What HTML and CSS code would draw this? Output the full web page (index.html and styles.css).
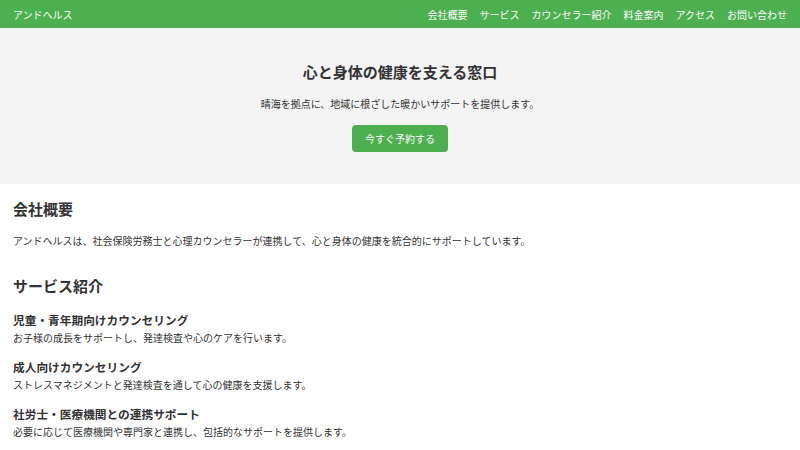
FILE: index.html
```html
<!DOCTYPE html>
<html lang="ja">

<head>
    <meta charset="UTF-8">
    <meta name="viewport" content="width=device-width, initial-scale=1.0">
    <title>アンドヘルス</title>
    <link rel="stylesheet" href="styles.css">
</head>

<body>
    <!-- ヘッダー -->
    <header class="site-header">
        <div class="logo">アンドヘルス</div>
        <ul class="nav">
            <li>会社概要</li>
            <li>サービス</li>
            <li>カウンセラー紹介</li>
            <li>料金案内</li>
            <li>アクセス</li>
            <li>お問い合わせ</li>
        </ul>
    </header>

    <!-- メインビジュアル -->
    <section class="hero">
        <h1>心と身体の健康を支える窓口</h1>
        <p>晴海を拠点に、地域に根ざした暖かいサポートを提供します。</p>
        <a class="btn" href="#">今すぐ予約する</a>
    </section>

    <!-- 本文 -->
    <main class="content">
        <h2>会社概要</h2>
        <p class="lead">アンドヘルスは、社会保険労務士と心理カウンセラーが連携して、心と身体の健康を統合的にサポートしています。</p>

        <h2 class="section-title">サービス紹介</h2>
        <div class="service">
            <h3>児童・青年期向けカウンセリング</h3>
            <p>お子様の成長をサポートし、発達検査や心のケアを行います。</p>
        </div>
        <div class="service">
            <h3>成人向けカウンセリング</h3>
            <p>ストレスマネジメントと発達検査を通して心の健康を支援します。</p>
        </div>
        <div class="service">
            <h3>社労士・医療機関との連携サポート</h3>
            <p>必要に応じて医療機関や専門家と連携し、包括的なサポートを提供します。</p>
        </div>
    </main>
</body>

</html>
```

FILE: styles.css
```css
body,
ul,
li,
h1,
h2,
h3,
p {
    margin: 0;
    padding: 0;
}

li {
    list-style: none;
}

body {
    font-family: "Noto Sans CJK JP", "Noto Sans", sans-serif;
    font-size: 10px;
    line-height: 15px;
    color: #333;
    background-color: #fff;
}

.site-header {
    display: flex;
    justify-content: space-between;
    align-items: center;
    height: 28px;
    padding: 0 13px;
    color: #fff;
    background-color: #4caf50;
}

.nav {
    display: flex;
    gap: 12px;
}

.hero {
    padding: 35px 0 32px;
    text-align: center;
    background-color: #f4f4f4;
}

.hero h1 {
    font-size: 15px;
    line-height: 18px;
    margin-bottom: 15px;
}

.hero p {
    margin-bottom: 14px;
}

.btn {
    display: inline-block;
    width: 96px;
    height: 27px;
    line-height: 27px;
    color: #fff;
    text-decoration: none;
    border-radius: 4px;
    background-color: #4caf50;
}

.content {
    padding: 16px 13px;
}

.content h2 {
    font-size: 15px;
    line-height: 18px;
}

.lead {
    margin-top: 15px;
}

.section-title {
    margin-top: 29px;
}

.service {
    margin-top: 18px;
}

.service + .service {
    margin-top: 15px;
}

.service h3 {
    font-size: 11.7px;
    line-height: 14px;
    margin-bottom: 3px;
}
```
